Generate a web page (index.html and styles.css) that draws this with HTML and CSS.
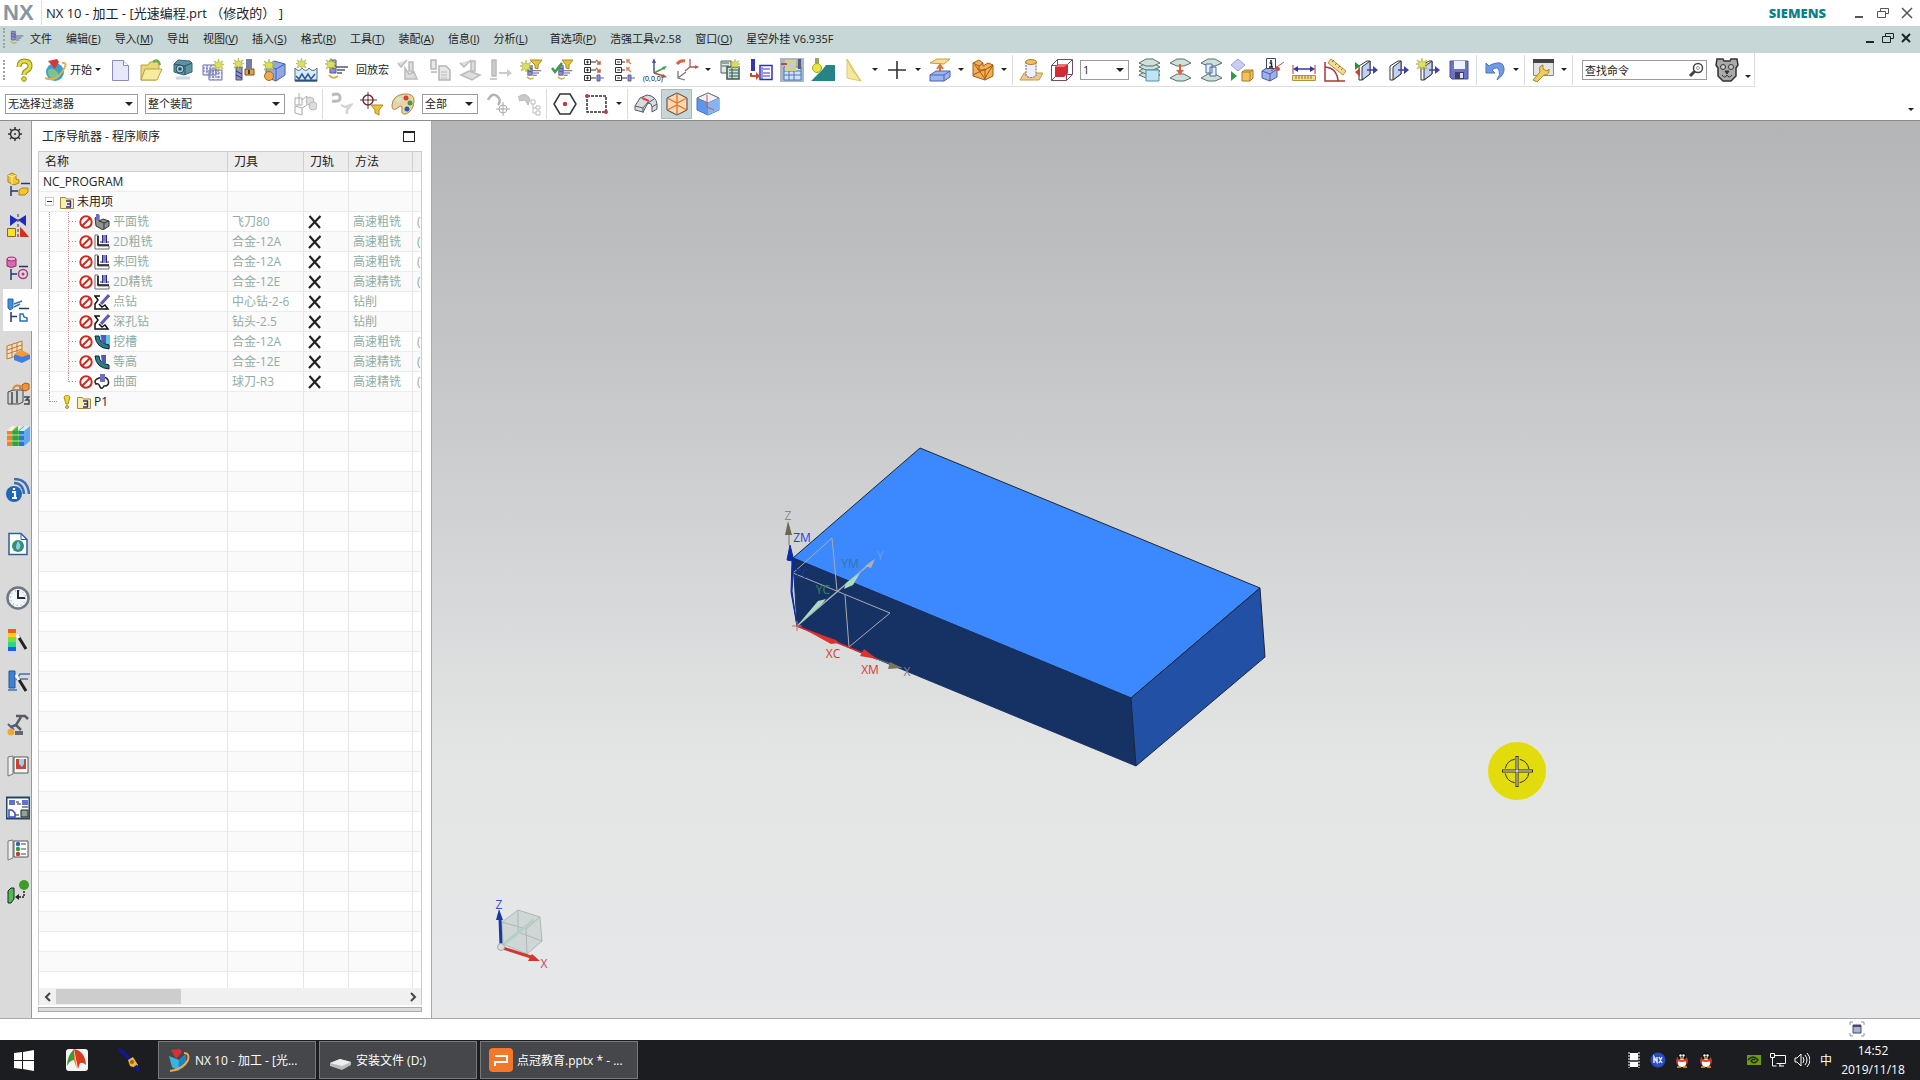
FILE: index.html
```html
<!DOCTYPE html>
<html lang="zh-CN">
<head>
    <meta charset="UTF-8">
    <title>NX 10 - 加工</title>
    <link rel="stylesheet" href="styles.css">
</head>
<body>
<svg class="defs" aria-hidden="true">
    <symbol id="ban" viewBox="0 0 14 14"><circle cx="7" cy="7" r="5.7" fill="#fff" stroke="#cc2a1e" stroke-width="2"/><path d="M3 11 11 3" stroke="#cc2a1e" stroke-width="2"/></symbol>
    <symbol id="cross" viewBox="0 0 14 14"><path d="M1.5 1 12 13M12.500 1 1 13" stroke="#222" stroke-width="2.200"/></symbol>
    <symbol id="folder" viewBox="0 0 14 14"><path d="M.5 2.500h5l1 1.500h7v9.500H.5z" fill="#f6efae" stroke="#9a8c3c"/><path d="M6 6h5M7 9h4M6 12h5M10.500 6v6" stroke="#3b2a8c" stroke-width="1.400"/></symbol>
    <symbol id="mill" viewBox="0 0 16 16"><path d="M1 1v14h14v-3H4V1z" fill="#fff" stroke="#666"/><path d="M4 2v9h11" fill="none" stroke="#111" stroke-width="1.500"/><path d="M8 1h5v6H8z" fill="#8080cc"/><path d="M8.500 1v8M12.500 1v8M6 8h9" stroke="#2b2b80"/></symbol>
    <symbol id="drill" viewBox="0 0 16 16"><path d="M6 2H1l3 4-3 4v5h13l-3-4-3 2-3-3" fill="#fff" stroke="#111" stroke-width="1.500"/><path d="M15 1 7 10" stroke="#5b5bb8" stroke-width="3"/></symbol>
    <symbol id="pocket" viewBox="0 0 16 16"><path d="M1 2h4q0 7 10 9v4Q2 14 1 2z" fill="#2a7f86" stroke="#123"/><path d="M7 1h5v8H8z" fill="#5656b4"/></symbol>
    <symbol id="newstar" viewBox="0 0 12 12"><path d="m6 0 1 4 4-2-2 3 3 1-3 1 2 4-4-2-1 3-1-3-4 2 2-4-3-1 3-1-2-3 4 2z" fill="#dfe05a" stroke="#929a3e" stroke-width=".5"/></symbol>
    <symbol id="tool" viewBox="0 0 24 24"><path d="M5 2h6v13H5z" fill="#8d90c9" stroke="#50549a"/><path d="M5 5l6 2M5 9l6 2" stroke="#3d4188"/><path d="M11 9h12M12 12h8M12 15h5" stroke="#555a80" stroke-width="1.300"/><path d="M4 17q4 5 9 1" fill="none" stroke="#d0b040" stroke-width="2"/></symbol>
    <symbol id="box" viewBox="0 0 24 24"><path d="m3 8 8-5 11 3v11l-9 6L3 19z" fill="#8fa8e8" stroke="#4b60a8"/><path d="m3 8 10 3v12M13 11l9-5" fill="none" stroke="#4b60a8"/></symbol>
    <symbol id="sheet" viewBox="0 0 24 24"><path d="m2 5 7-4h7l7 4-7 3H9z" fill="#cfe0dc" stroke="#55706a"/></symbol>
    <symbol id="plane" viewBox="0 0 24 24"><path d="m5 8 8-5h3v13l-8 6H5z" fill="#fff" stroke="#333"/><path d="m8 9 8-6v13l-8 6z" fill="#bfd0f4" stroke="#333"/><path d="M13 12h8" stroke="#4040a0" stroke-width="1.500"/><path d="m19 8 5 4-5 4z" fill="#4040a0"/></symbol>
    <symbol id="book" viewBox="0 0 24 24"><path d="m2 3 5-1v18l-5 2z" fill="#eee" stroke="#777"/><path d="M8 3h14v16H8z" fill="#fff" stroke="#555"/></symbol>
    <symbol id="penguin" viewBox="0 0 16 16"><ellipse cx="8" cy="9" rx="6" ry="5.500" fill="#c4392a"/><ellipse cx="8" cy="5" rx="4" ry="5" fill="#111"/><ellipse cx="8" cy="11" rx="4" ry="4" fill="#fff"/><circle cx="6.500" cy="3.500" r="1.200" fill="#fff"/><circle cx="9.500" cy="3.500" r="1.200" fill="#fff"/><path d="M6 6h4M3 15h4M9 15h4" stroke="#f2a02c" stroke-width="1.500"/><path d="M4 8q4 2 8 0" stroke="#d9412f" stroke-width="2" fill="none"/></symbol>
    <symbol id="restore" viewBox="0 0 12 12"><path d="M3.500 4V1.500h8v5H9M.5 4.500h8v6h-8z" fill="none" stroke="currentColor"/></symbol>
    <symbol id="nx" viewBox="0 0 24 24"><circle cx="12" cy="14" r="9" fill="#3f9ed0"/><path d="M5 12q4-4 9 2t-3 8q-7-3-6-10z" fill="#7ec48a"/><path d="M2 20q10 4 17-6t0-9" fill="none" stroke="#e5b04a" stroke-width="2"/><path d="m5 3 9-2 2 3-4 7z" fill="#cf3b35"/></symbol>
    <symbol id="nx-task" viewBox="0 0 24 24"><path d="m2 8 10 4 7-6v10l-8 7-6-4z" fill="#36b4e4"/><path d="m12 12 7-6v10l-8 7z" fill="#1c86c4"/><path d="M3 23q14-2 18-11 2-7-4-7" fill="none" stroke="#f0a84a" stroke-width="2"/><path d="m4 2 9-1 2 3-6 7z" fill="#d83038"/></symbol>
</svg>

<div class="app">
    <header class="titlebar">
        <span class="nx-logo">NX</span>
        <h1>NX 10 - 加工 - [光速编程.prt （修改的） ]</h1>
        <span class="siemens">SIEMENS</span>
        <div class="win-buttons">
            <button type="button" aria-label="最小化"><svg viewBox="0 0 12 12"><path d="M2 10h8" stroke="currentColor" stroke-width="2"/></svg></button>
            <button type="button" aria-label="还原"><svg><use href="#restore"/></svg></button>
            <button type="button" aria-label="关闭"><svg viewBox="0 0 12 12"><path d="m1 1 10 10M11 1 1 11" stroke="currentColor" stroke-width="1.500"/></svg></button>
        </div>
    </header>

    <nav class="menubar">
        <span class="grip"></span>
        <svg class="menu-icon"><use href="#tool"/></svg>
        <button type="button">文件</button>
        <button type="button">编辑(<u>E</u>)</button>
        <button type="button">导入(<u>M</u>)</button>
        <button type="button">导出</button>
        <button type="button">视图(<u>V</u>)</button>
        <button type="button">插入(<u>S</u>)</button>
        <button type="button">格式(<u>R</u>)</button>
        <button type="button">工具(<u>T</u>)</button>
        <button type="button">装配(<u>A</u>)</button>
        <button type="button">信息(<u>I</u>)</button>
        <button type="button">分析(<u>L</u>)</button>
        <button type="button" class="wide">首选项(<u>P</u>)</button>
        <button type="button">浩强工具v2.58</button>
        <button type="button">窗口(<u>O</u>)</button>
        <button type="button">星空外挂 V6.935F</button>
        <div class="doc-buttons">
            <button type="button" aria-label="最小化"><svg viewBox="0 0 12 12"><path d="M2 10h8" stroke="currentColor" stroke-width="2"/></svg></button>
            <button type="button" aria-label="还原"><svg><use href="#restore"/></svg></button>
            <button type="button" aria-label="关闭"><svg viewBox="0 0 12 12"><path d="m2 2 8 8M10 2l-8 8" stroke="currentColor" stroke-width="2"/></svg></button>
        </div>
    </nav>

    <div class="toolbar toolbar-main">
        <span class="grip"></span>
        <button type="button" class="tb" aria-label="帮助"><svg viewBox="0 0 24 24"><path d="M7 9q0-6 5.500-6T18 8q0 3-3 4.500T12 17" fill="none" stroke="#8f8a22" stroke-width="5"/><path d="M7 9q0-6 5.500-6T18 8q0 3-3 4.500T12 17" fill="none" stroke="#e6dc3c" stroke-width="3"/><circle cx="12" cy="21" r="2.300" fill="#e6dc3c" stroke="#8f8a22"/></svg></button>
        <button type="button" class="tb" aria-label="NX"><svg><use href="#nx"/></svg></button>
        <button type="button" class="tb-text">开始</button>
        <button type="button" class="drop" aria-label="开始选项"></button>
        <button type="button" class="tb" aria-label="新建"><svg viewBox="0 0 24 24"><path d="M4.500 2.500h11l5 5v15h-16z" fill="#e6e8fb" stroke="#8a8cc0"/><path d="M15.500 2.500v5h5" fill="#fff" stroke="#8a8cc0"/></svg></button>
        <button type="button" class="tb" aria-label="打开"><svg viewBox="0 0 24 24"><path d="M2 7h7l2-3h9v6l-3 12H2z" fill="#e9d878" stroke="#b5a145"/><path d="m2 22 4-11h17l-5 11z" fill="#f7ec9d" stroke="#b5a145"/><path d="M14 4q5-4 7 3" stroke="#70a85a" stroke-width="2.500" fill="none"/></svg></button>
        <button type="button" class="tb" aria-label="快照"><svg viewBox="0 0 24 24"><path d="m4 6 4-4 12 1 2 2v9l-8 3-10-3z" fill="#5d93a3" stroke="#3a6674"/><path d="m4 6 11 2 7-3M15 8v9" fill="none" stroke="#2c5563"/><circle cx="10" cy="11" r="4" fill="#9cc7d0" stroke="#264e5c"/><circle cx="10" cy="11" r="1.800" fill="#28505e"/><path d="M6 20h14" stroke="#c9d9dd" stroke-width="3"/></svg></button>
        <button type="button" class="tb" aria-label="创建程序"><svg viewBox="0 0 24 24"><path d="M2 7h13v10H2zM8 12h13v10H8z" fill="#eef0fb" stroke="#6a6ea8"/><path d="M2 10h13M2 13h13M6 7v10M10 7v10M8 15h13M8 19h13M12 12v10M17 12v10" stroke="#6a6ea8" stroke-dasharray="2 1"/><use href="#newstar" x="12" y="1" width="11" height="11"/></svg></button>
        <button type="button" class="tb" aria-label="创建刀具"><svg viewBox="0 0 24 24"><path d="M4 9h6v13H4z" fill="#9094cc" stroke="#4a4e90"/><path d="m4 13 6 3M4 17l6 3" stroke="#334"/><path d="M13 11h9v6h-9z" fill="#e0a74a" stroke="#774d22"/><path d="M14 1h6v10h-6z" fill="#777ca5"/><path d="M17 12v4" stroke="#553a20" stroke-width="2"/><use href="#newstar" x="1" y="0" width="11" height="11"/></svg></button>
        <button type="button" class="tb" aria-label="创建几何体"><svg viewBox="0 0 24 24"><use href="#box"/><circle cx="6" cy="18" r="4.500" fill="#f2a948" stroke="#a8692a"/><use href="#newstar" x="0" y="1" width="12" height="12"/></svg></button>
        <button type="button" class="tb" aria-label="创建方法"><svg viewBox="0 0 24 24"><path d="M1 10q4 5 7 0 4 5 7 0 4 5 8 0v13H1z" fill="#d9ecf2" stroke="#4a6e90"/><path d="m2 18 3 3 3-5 3 5 3-5 3 5 4-5" fill="none" stroke="#3056a0" stroke-width="1.500"/><path d="M1 22.500h22" stroke="#30507a" stroke-width="2"/><use href="#newstar" x="2" y="0" width="11" height="11"/></svg></button>
        <button type="button" class="tb" aria-label="创建工序"><svg viewBox="0 0 24 24"><use href="#tool"/><use href="#newstar" x="0" y="0" width="12" height="12"/></svg></button>
        <button type="button" class="tb-text macro">回放宏</button>
        <button type="button" class="tb" disabled aria-label="生成刀轨"><svg viewBox="0 0 24 24"><path d="m2 5 3 4 6-7M13 4h4v9h-4zM9 21V10l4 6 5-2 3 7z" fill="#ddd" stroke="#bbb" stroke-width="1.500"/></svg></button>
        <button type="button" class="tb" disabled aria-label="列出刀轨"><svg viewBox="0 0 24 24"><path d="M4 2h5v9H4zM4 14h6M12 8h7l4 4v10H12z" fill="#e8e8e8" stroke="#b5b5b5" stroke-width="1.500"/><path d="M14 14h6M14 17h6M14 20h6" stroke="#bbb"/></svg></button>
        <button type="button" class="tb" disabled aria-label="确认刀轨"><svg viewBox="0 0 24 24"><path d="m2 5 4 4 7-7M13 3h4v10h-4zM3 17l8-4 11 4-8 5z" fill="#ddd" stroke="#bbb" stroke-width="1.500"/></svg></button>
        <button type="button" class="tb" disabled aria-label="机床仿真"><svg viewBox="0 0 24 24"><path d="M3 2h4v16H3zM1 21h7M10 15h8" fill="#ccc" stroke="#bbb" stroke-width="1.500"/><path d="m18 11 5 4-5 4z" fill="#ccc"/></svg></button>
        <button type="button" class="tb" aria-label="新建过滤"><svg viewBox="0 0 24 24"><use href="#tool" x="4" y="6" width="18" height="18"/><path d="M10 2h12l-4 5v4l-3-1V7z" fill="#e9c33c" stroke="#a8872a"/><use href="#newstar" x="0" y="2" width="12" height="12"/></svg></button>
        <button type="button" class="tb" aria-label="确认过滤"><svg viewBox="0 0 24 24"><use href="#tool" x="4" y="6" width="18" height="18"/><path d="M11 2h11l-4 5v4l-3-1V7z" fill="#e9c33c" stroke="#a8872a"/><path d="m1 10 3 4 7-9" fill="none" stroke="#3d9c4a" stroke-width="2.500"/></svg></button>
        <button type="button" class="tb" aria-label="展开"><svg viewBox="0 0 24 24"><path d="M2.500 1.500h6v5h-6zM2.500 9.500h6v5h-6zM2.500 17.500h6v5h-6z" fill="#fff" stroke="#333"/><path d="M4 4h3M5.500 2.500v3M4 12h3M5.500 10.500v3M4 20h3M5.500 18.500v3M9 4h5M9 12h5M9 20h5" stroke="#333"/><path d="m14 2 4 4m0-3v3h-3M14 10l4 4m0-3v3h-3" stroke="#c8644a" stroke-width="1.500" fill="none"/><path d="M15 17h3v6h-3zM18 20h4" stroke="#5a5eaa" fill="#8a8dd0"/></svg></button>
        <button type="button" class="tb" aria-label="折叠"><svg viewBox="0 0 24 24"><path d="M2.500 1.500h6v5h-6zM2.500 9.500h6v5h-6zM2.500 17.500h6v5h-6z" fill="#fff" stroke="#333"/><path d="M4 4h3M4 12h3M4 20h3M9 4h3M9 12h3M9 20h5" stroke="#333"/><path d="m18 6-4-4v3m0-3h3M18 14l-4-4v3m0-3h3" stroke="#d98a5a" stroke-width="1.500" fill="none"/><path d="M15 17h3v6h-3zM18 20h4" stroke="#5a5eaa" fill="#8a8dd0"/></svg></button>
        <button type="button" class="tb" aria-label="原点"><svg class="spill" viewBox="0 0 24 24"><path d="M10 15V3" stroke="#4a50a8" stroke-width="1.500"/><path d="m10 0 2 5H8z" fill="#4a50a8"/><path d="m10 15 10-5" stroke="#3f9c56" stroke-width="1.500"/><path d="m23 8-5 1 2 3z" fill="#3f9c56"/><path d="m10 15 10 3" stroke="#c04c3c" stroke-width="1.500"/><path d="m23 19-5 1 1-4z" fill="#c04c3c"/><text class="origin" x="-1" y="23">(0,0,0)</text></svg></button>
        <button type="button" class="tb" aria-label="定向"><svg viewBox="0 0 24 24"><path d="M2 6q3-4 8-3" stroke="#d9673e" stroke-width="3" fill="none"/><path d="M15 1v8h8M15 9l-5 4" stroke="#b35a50" fill="none" stroke-width="1.300"/><path d="m24 9-4-2v4z" fill="#b35a50"/><path d="M3 13v7l7 2M3 20l8-6" stroke="#777" fill="none" stroke-width="1.300"/></svg></button>
        <button type="button" class="drop" aria-label="定向选项"></button>
        <button type="button" class="tb" aria-label="后处理"><svg viewBox="0 0 24 24"><path d="M3 3h10v12H3z" fill="#dfe8e2" stroke="#4a6258"/><path d="M4 5h7M4 8h7" stroke="#4a6258"/><path d="M9 9h12v12H9z" fill="#cfe2da" stroke="#395a50" stroke-width="1.500"/><path d="M11 12h9M11 15h9M11 18h9M14 10v11" stroke="#395a50"/><use href="#newstar" x="12" y="1" width="10" height="10"/></svg></button>
        <button type="button" class="tb" aria-label="车间文档"><svg viewBox="0 0 24 24"><path d="M2 1h4v12H2z" fill="#3636b0"/><path d="M11 7.500h12v14H11z" fill="#fff" stroke="#3030c0" stroke-width="1.500"/><path d="M14 11h7M14 15h7M14 18h7M13 9v12" stroke="#3030c0"/><path d="M2 15v3h6" stroke="#c84b32" stroke-width="2" fill="none"/><path d="m7 14 4 4-4 4z" fill="#c84b32"/></svg></button>
        <button type="button" class="tb" aria-label="网格"><svg viewBox="0 0 24 24"><path d="M0 0h24v24H0z" fill="#aab6c2"/><path d="M4 9h17v13H4z" fill="#cfe0f8" stroke="#4a76c0"/><path d="M4 13h17M4 17h17M9 9v13M14 9v13" stroke="#4a76c0"/><path d="M6 3h9v9H6z" fill="#c5ccd0" stroke="#dcd373" stroke-width="2"/><path d="M1 6h6" stroke="#c04a4a" stroke-width="2"/><path d="M18 1h3v10h-3z" fill="#555a80"/></svg></button>
        <button type="button" class="tb" aria-label="切削"><svg viewBox="0 0 24 24"><path d="m0 23 12-12 3-4h9v16z" fill="#268486"/><path d="M4 0h4v6H4z" fill="#9ba36a"/><circle cx="6" cy="10" r="4.500" fill="#e8e840" stroke="#aaa520"/></svg></button>
        <button type="button" class="tb" aria-label="分析"><svg viewBox="0 0 24 24"><path d="M5 1v19l14 3z" fill="#f5e9a2" stroke="#ddca6c"/><path d="m5 1 6 12 8 10" stroke="#e0c050" fill="none"/></svg></button>
        <button type="button" class="drop" aria-label="分析选项"></button>
        <button type="button" class="tb" aria-label="点"><svg viewBox="0 0 24 24"><path d="M12 3v18M3 12h18" stroke="#333" stroke-width="1.600"/></svg></button>
        <button type="button" class="drop" aria-label="点选项"></button>
        <button type="button" class="tb" aria-label="偏置"><svg viewBox="0 0 24 24"><path d="m2 5 7-4h13l-6 5z" fill="#f6dc98" stroke="#c79a3e"/><path d="M12 16V8M9 11l3-4 3 4" stroke="#d8722e" stroke-width="2" fill="none"/><path d="m2 17 6-4h14v6l-6 4H2z" fill="#9cb4f0" stroke="#4d62b4"/><path d="M2 17h14l6-4M16 17v6" stroke="#4d62b4" fill="none"/></svg></button>
        <button type="button" class="drop" aria-label="偏置选项"></button>
        <button type="button" class="tb" aria-label="拆分"><svg viewBox="0 0 24 24"><path d="m2 5 6-3 4 3v3l5-3 5 2v11l-8 4-12-4z" fill="#f0b24e" stroke="#9a5c1e"/><path d="m2 5 6 3 4-3M8 8v4l6 0 8-5M14 11v11M2 17l12-6M4 7l10 14M14 20l8-13" fill="none" stroke="#a85220"/></svg></button>
        <button type="button" class="drop" aria-label="拆分选项"></button>
        <span class="sep"></span>
        <button type="button" class="tb" aria-label="圆柱"><svg viewBox="0 0 24 24"><path d="m1 22 4-7h19l-4 7z" fill="#ebc98a" stroke="#c19a4e"/><path d="M7 4v14q5 3 10 0V4" fill="#eef" stroke="#667" stroke-dasharray="2 1"/><ellipse cx="12" cy="4" rx="5.500" ry="2.500" fill="#f4c05c" stroke="#b07c2a"/></svg></button>
        <button type="button" class="tb" aria-label="包容块"><svg viewBox="0 0 24 24"><path d="M1.500 7.500h15v15h-15zM7.500 1.500h15v15h-15zM1.500 7.500l6-6M16.500 7.500l6-6M16.500 22.500l6-6M1.500 22.500l6-6" fill="none" stroke="#7a4a5a"/><path d="m5 9 4-3h9v9l-4 4H5z" fill="#cf2d36"/><path d="m5 9 4-3h9l-4 3z" fill="#ee7076"/></svg></button>
        <div class="select layer-select"><select aria-label="工作图层"><option>1</option></select></div>
        <button type="button" class="tb" aria-label="图层设置"><svg viewBox="0 0 24 24"><use href="#sheet" y="12" width="24" height="24"/><use href="#sheet" y="8" width="24" height="24"/><use href="#sheet" y="4" width="24" height="24"/><use href="#sheet" width="24" height="24"/><path d="M9 12h13v11H9z" fill="#bfe4f2" stroke="#4a90a8"/></svg></button>
        <button type="button" class="tb" aria-label="移动至图层"><svg viewBox="0 0 24 24"><use href="#sheet" width="24" height="24"/><use href="#sheet" y="15" width="24" height="24"/><path d="M12 6v8" stroke="#e0603a" stroke-width="2"/><path d="M8 12h8l-4 5z" fill="#e0603a"/></svg></button>
        <button type="button" class="tb" aria-label="复制至图层"><svg viewBox="0 0 24 24"><use href="#sheet" width="24" height="24"/><use href="#sheet" y="15" width="24" height="24"/><path d="M7 6h6v9H7zM11 9h6v9h-6z" fill="#e4eefa" stroke="#4b6a94"/></svg></button>
        <button type="button" class="tb" aria-label="替换"><svg viewBox="0 0 24 24"><path d="m1 7 7-6 7 6-7 6z" fill="#c8cdf2" stroke="#979fd6"/><path d="m1 13 6 5-6 5z" fill="#2f9a4a"/><path d="m12 14 3-2h8v8l-3 3h-8z" fill="#f2c25a" stroke="#a87a28"/><path d="M12 14h8l3-2M20 14v9" fill="none" stroke="#a87a28"/></svg></button>
        <button type="button" class="tb" aria-label="对象信息"><svg viewBox="0 0 24 24"><path d="m1 13 6-4h9v10l-7 4-8-3z" fill="#9cb0ea" stroke="#4b5ea8"/><path d="m1 13 8 3v7M9 16l7-5" stroke="#4b5ea8" fill="none"/><path d="M5.500.5h9v10h-9z" fill="#fff" stroke="#446"/><path d="M10 2v2M8.500 5h2v4M8 9h4" stroke="#223" stroke-width="1.500" fill="none"/><path d="m10 13 13-9" stroke="#c84848"/><circle cx="17" cy="11" r="2" fill="#d24a3a"/></svg></button>
        <button type="button" class="tb" aria-label="测量距离"><svg viewBox="0 0 24 24"><path d="M1 7v9M23 7v9" stroke="#b03a3a"/><path d="M3 11h18" stroke="#35359c" stroke-width="1.500"/><path d="m1 11 5-3v6zM23 11l-5-3v6z" fill="#35359c"/><path d="M.5 17.500h23v5H.5z" fill="#f2dc94" stroke="#b3923c"/><path d="M4 18v3M7 18v3M10 18v3M13 18v3M16 18v3M19 18v3" stroke="#8f7430"/></svg></button>
        <button type="button" class="tb" aria-label="测量角度"><svg viewBox="0 0 24 24"><path d="M2 4v19h20M2 9q12 1 13 14" fill="none" stroke="#a83838" stroke-width="1.500"/><path d="m8 1 15 12-3 4L5 5z" fill="#f2dc94" stroke="#b3923c"/><path d="m9 4 2-2M12 7l2-2M15 10l2-2M18 12l2-2" stroke="#8f7430"/></svg></button>
        <button type="button" class="tb" aria-label="替换面"><svg viewBox="0 0 24 24"><use href="#plane"/><path d="m1 4 5 4-5 4z" fill="#2f8a3e"/><path d="m6 10-5 4 5 5z" fill="#cf402e"/></svg></button>
        <button type="button" class="tb" aria-label="偏置面"><svg><use href="#plane"/></svg></button>
        <button type="button" class="tb" aria-label="新建面"><svg viewBox="0 0 24 24"><use href="#plane"/><use href="#newstar" x="0" y="0" width="12" height="12"/></svg></button>
        <button type="button" class="tb" aria-label="保存"><svg viewBox="0 0 24 24"><path d="M3 3h18v18H5l-2-2z" fill="#6c73c4" stroke="#4a4e94"/><path d="M7 3h11v8H7z" fill="#eef2fa"/><path d="M8 14h9v7H8z" fill="#3d4060"/><path d="M13 15h3v5h-3z" fill="#dde"/></svg></button>
        <span class="sep"></span>
        <button type="button" class="tb" aria-label="撤消"><svg viewBox="0 0 24 24"><path d="M3 5v10h9l-3-3q5-4 7 0t-2 10q8-6 7-12T14 5 6 8z" fill="#6d9be4" stroke="#4a76bc"/></svg></button>
        <button type="button" class="drop" aria-label="撤消选项"></button>
        <span class="sep"></span>
        <button type="button" class="tb" aria-label="定制"><svg viewBox="0 0 24 24"><path d="M2.500 1.500h20v16h-20z" fill="#e4e4e4" stroke="#888"/><path d="M2 1h21v4H2z" fill="#444"/><path d="m2 22 7-8q-2-6 3-7v4l4 2 2-2q1 6-5 6l-7 7z" fill="#f0cc58" stroke="#a8862a"/></svg></button>
        <button type="button" class="drop" aria-label="定制选项"></button>
        <span class="sep"></span>
        <div class="search">
            <input type="text" aria-label="查找命令" value="查找命令">
            <svg viewBox="0 0 16 16"><circle cx="10" cy="6" r="4.500" fill="none" stroke="#444" stroke-width="1.500"/><path d="m7 9-5 5" stroke="#444" stroke-width="3"/><circle cx="10" cy="6" r="1.500" fill="none" stroke="#999"/></svg>
        </div>
        <button type="button" class="tb" aria-label="角色"><svg viewBox="0 0 24 24"><path d="M2 1h6l1 2h6l1-2h6l1 6-2 3v8l-5 5H8l-5-5v-8L1 7z" fill="#aaa" stroke="#333" stroke-width="1.500"/><circle cx="8" cy="9" r="2.500" fill="#ccc" stroke="#333"/><circle cx="16" cy="9" r="2.500" fill="#ccc" stroke="#333"/><path d="M10 13h4l-2 3z" fill="#333" stroke="#333"/><path d="M7 17q3 4 5 0 2 4 5 0" fill="none" stroke="#333"/></svg></button>
        <button type="button" class="drop drop-low" aria-label="工具条选项"></button>
    </div>

    <div class="toolbar toolbar-select">
        <div class="select filter-select"><select aria-label="类型过滤器"><option>无选择过滤器</option></select></div>
        <div class="select scope-select"><select aria-label="选择范围"><option>整个装配</option></select></div>
        <button type="button" class="tb" disabled aria-label="部件间链接"><svg viewBox="0 0 24 24"><path d="M2 6h7v7H2zM2 14l7 2v7l-7-2zM6 1v12M9 8l5-4v9l-5 3" fill="none" stroke="#aaa"/><circle cx="17" cy="9" r="4" fill="#ddd" stroke="#bbb"/><circle cx="20" cy="14" r="4" fill="#ddd" stroke="#bbb"/></svg></button>
        <span class="sep"></span>
        <button type="button" class="tb" disabled aria-label="重置"><svg viewBox="0 0 24 24"><path d="M3 3q9-3 8 4-1 3-8 2" fill="none" stroke="#bbb" stroke-width="3"/><path d="m12 13 4 2 6-2-4 5v4" fill="none" stroke="#d4d4d4" stroke-width="2.500"/></svg></button>
        <button type="button" class="tb" aria-label="捕捉过滤"><svg viewBox="0 0 24 24"><circle cx="8" cy="8" r="5" fill="none" stroke="#6a3030" stroke-width="1.500"/><path d="M8 0v17M0 8h17" stroke="#6a3030"/><path d="M11 13h12l-4 5v5l-4-2v-3z" fill="#e9c33c" stroke="#b08a28"/></svg></button>
        <button type="button" class="tb" aria-label="颜色过滤"><svg viewBox="0 0 24 24"><path d="M1 13Q2 3 13 2t10 8-8 12q-5 1-4-5t-6 0q-4 2-4-4z" fill="#ecd3a0" stroke="#a8864c"/><circle cx="8" cy="8" r="2.500" fill="#c8e8e0"/><circle cx="15" cy="6" r="2.500" fill="#d04030"/><circle cx="19" cy="11" r="2.500" fill="#38a04a"/><circle cx="16" cy="17" r="2.500" fill="#2a56c0"/></svg></button>
        <div class="select all-select"><select aria-label="规则"><option>全部</option></select></div>
        <button type="button" class="tb" disabled aria-label="旋转"><svg viewBox="0 0 24 24"><path d="M2 8q4-8 9-4t1 9" fill="none" stroke="#b4b4b4" stroke-width="2.500"/><circle cx="17" cy="17" r="4" fill="none" stroke="#aaa"/><path d="M17 10v14M10 17h14" stroke="#aaa"/></svg></button>
        <button type="button" class="tb" disabled aria-label="层级"><svg viewBox="0 0 24 24"><path d="M1 5q8-6 12 2l-2 6-3-5-6 1" fill="#c8c8c8" stroke="#bbb"/><path d="M14 8h4v4h-4zM19 14h4v3h-4zM19 19h4v4h-4zM16 12v9h3M16 16h3" fill="none" stroke="#bbb"/></svg></button>
        <span class="sep"></span>
        <button type="button" class="tb" aria-label="选择意图"><svg viewBox="0 0 24 24"><path d="M7 2h10l6 10-6 10H7L1 12z" fill="#fff" stroke="#333" stroke-width="1.500"/><circle cx="12" cy="12" r="2.200" fill="#c03a44"/></svg></button>
        <button type="button" class="tb" aria-label="矩形选择"><svg viewBox="0 0 24 24"><path d="M3 4h19v16H3z" fill="none" stroke="#333" stroke-width="1.500" stroke-dasharray="3 1"/><circle cx="3" cy="4" r="2" fill="#c03a44"/><circle cx="22" cy="20" r="2" fill="#c03a44"/></svg></button>
        <button type="button" class="drop" aria-label="选择方式"></button>
        <span class="sep"></span>
        <button type="button" class="tb" aria-label="着色"><svg viewBox="0 0 24 24"><path d="m1 14 5-8 7-3q9 1 10 9v5l-5 3v-5q0-4-4-4l-5 9-8-2z" fill="#d8dbe0" stroke="#555b66"/><path d="m1 14 8 2 5-6M9 16v5M14 11l6-4M18 15l5-3" fill="none" stroke="#555b66"/><path d="m8 6 7 3" stroke="#d04848" stroke-width="2"/></svg></button>
        <button type="button" class="tb active" aria-label="带边着色"><svg viewBox="0 0 24 24"><path d="m2 6 10-5 10 5v12l-10 5-10-5z" fill="#fcd9b4" stroke="#444"/><path d="m2 6 10 5 10-5M12 11v12M2 18l10-5 10 5M12 1v12" stroke="#e0702e" fill="none" stroke-width="1.300"/></svg></button>
        <button type="button" class="tb" aria-label="透视"><svg viewBox="0 0 24 24"><path d="m1 6 11-5 11 5v12l-11 5-11-5z" fill="#5b97ec" stroke="#4a72c0"/><path d="m1 6 11-5 11 5-11 5z" fill="#eef2fa" stroke="#777"/><path d="m12 11 11-5v12l-11 5z" fill="#86b4f4"/><path d="M11 3v12l7 3" stroke="#d05050" fill="none"/></svg></button>
        <button type="button" class="drop drop-end" aria-label="选择条选项"></button>
    </div>

    <main class="work">
        <aside class="resource-bar">
            <button type="button" class="gear" aria-label="设置"><svg viewBox="0 0 16 16"><circle cx="8" cy="8" r="4.500" fill="none" stroke="#333" stroke-width="1.500"/><circle cx="8" cy="8" r="1" fill="#333"/><path d="M8 1v3M8 12v3M1 8h3M12 8h3M3 3l2 2M11 11l2 2M13 3l-2 2M5 11l-2 2" stroke="#333" stroke-width="1.500"/></svg></button>
            <button type="button" aria-label="装配导航器"><svg viewBox="0 0 24 24"><path d="m2 3 4-2 4 2v4l3 1v3l-5 2-6-3z" fill="#f2c42e" stroke="#a88418"/><path d="m2 3 4 2 4-2M6 5v7" stroke="#fff3a0" fill="none"/><path d="M5 14v10M5 19h7M15 11.500h9" stroke="#223a70" stroke-width="1.500"/><path d="m13 18 3-2h6v4l-3 3h-6z" fill="#f2c42e" stroke="#a88418"/></svg></button>
            <button type="button" aria-label="约束导航器"><svg viewBox="0 0 24 24"><path d="m4 1 8 5-8 6zM20 1l-8 5 8 6z" fill="#1d2cc0"/><path d="M12 0v24" stroke="#333" stroke-dasharray="3 2"/><path d="M1.500 14.500h8v8h-8z" fill="#f6e22e" stroke="#886a10"/><path d="M14 13q1 0 9 10h-9z" fill="#d0341e"/></svg></button>
            <button type="button" aria-label="部件导航器"><svg viewBox="0 0 24 24"><path d="M1 3v7q4 3 9 0V3z" fill="#dc6ab0" stroke="#8e2c6e"/><ellipse cx="5.500" cy="3" rx="4.500" ry="2" fill="#f4b0d8" stroke="#8e2c6e"/><path d="M5 13v11M5 18h6M13 10.500h9" stroke="#223a70" stroke-width="1.500"/><circle cx="17" cy="18" r="4.500" fill="none" stroke="#b03a80" stroke-width="1.500"/><circle cx="17" cy="18" r="1.500" fill="#b03a80"/></svg></button>
            <button type="button" class="current" aria-label="工序导航器"><svg viewBox="0 0 24 24"><path d="M2 1h5v9l-3 2-2-2z" fill="#3f90d8" stroke="#2a64a8"/><path d="m8 6 8-3M8 9l6-3" stroke="#3a72b4" stroke-width="1.500"/><path d="M5 14v10M5 18.500h6M13 10.500h10" stroke="#223a70" stroke-width="1.500"/><path d="M14 16h3l1 3 3 1v3h-7z" fill="none" stroke="#2a72b8" stroke-width="1.500"/></svg></button>
            <button type="button" aria-label="机床导航器"><svg viewBox="0 0 24 24"><path d="M1 6 16 1v13L1 19zM1 10l15-5M1 14l15-5M6 5v12M11 3v12" fill="#f3e2c8" stroke="#c0762c"/><path d="m8 15 7-4 9 4v4l-8 4-8-3z" fill="#3f7de0"/><path d="m8 14 7-4 9 4-8 3z" fill="#f09a38"/></svg></button>
            <button type="button" aria-label="机械导航器"><svg viewBox="0 0 24 24"><path d="m2 10 5-2h10v12l-4 2H2z" fill="#cfd4d8" stroke="#444"/><path d="M6 10v12M11 9v12M18 15h5l-3 3h3v4h-5" stroke="#444" stroke-width="1.500" fill="none"/><path d="M7 8q1-6 7-4v3" fill="none" stroke="#d88432" stroke-width="2"/><path d="m16 3 3-2 4 1v5l-3 2-4-1z" fill="#f2923a" stroke="#a85c1c"/></svg></button>
            <button type="button" class="spaced" aria-label="重用库"><svg viewBox="0 0 24 24"><path d="m1 7 5-5h3L6 7z" fill="#fff6d0"/><path d="M1 7h5v15H1z" fill="#f0812a"/><path d="m7 7 5-5h4l-4 5z" fill="#e4f8c8"/><path d="m6 7 6-5v17l-6 3zM12 7l6-5v17l-6 3z" fill="#48b848"/><path d="M7 7h5v15H7z" fill="#2fa33a"/><path d="m13 7 6-5h5l-5 5z" fill="#d8ecff"/><path d="m18 7 6-5v15l-6 5z" fill="#60a8f0"/><path d="M13 7h5v15h-5z" fill="#2a78c8"/><path d="M1 11h17M1 17h17" stroke="#fff" stroke-width=".7"/></svg></button>
            <button type="button" class="spaced" aria-label="HD3D"><svg viewBox="0 0 24 24"><circle cx="8" cy="16" r="8" fill="#1f66b8"/><path d="M8 10v2M6 14h3v6M6 20h5" stroke="#fff" stroke-width="2.200" fill="none"/><path d="M8 5q9 0 10 11M8 1q14 0 15 15" fill="none" stroke="#3a6cb8" stroke-width="2.500"/></svg></button>
            <button type="button" class="spaced" aria-label="浏览器"><svg viewBox="0 0 24 24"><path d="M3 1.500h12l6 6v15H3z" fill="#fff" stroke="#2f5f9a" stroke-width="1.500"/><path d="M15 1.500v6h6" fill="none" stroke="#2f5f9a"/><circle cx="12" cy="14" r="6" fill="#2f8f7c"/><path d="M12 9q5 6 0 9-4-2 0-9z" fill="#8fd0e0"/></svg></button>
            <button type="button" aria-label="历史记录"><svg viewBox="0 0 24 24"><circle cx="12" cy="12" r="10.500" fill="#f4f8fb" stroke="#6e7880" stroke-width="2.500"/><circle cx="12" cy="12" r="7.500" fill="none" stroke="#78828a" stroke-dasharray="1 3"/><path d="M12 4v8h7" fill="none" stroke="#1a2c48" stroke-width="2"/></svg></button>
            <button type="button" aria-label="材料"><svg viewBox="0 0 24 24"><path d="M2 1h8v4H2z" fill="#f05a24"/><path d="M2 5h8v4H2z" fill="#f8d020"/><path d="M2 9h8v5H2z" fill="#7ee030"/><path d="M2 14h8v5H2z" fill="#20d890"/><path d="M2 19h8v4H2z" fill="#1a60e8"/><path d="m12 8 8 13" stroke="#222" stroke-width="3"/><path d="m11 7 2 3" stroke="#fff" stroke-width="3"/></svg></button>
            <button type="button" aria-label="加工向导"><svg viewBox="0 0 24 24"><path d="M3 1h6v17H3z" fill="#3f80d0" stroke="#2a5494"/><path d="M24 4H14l-4 6M22 9h-8M2 20h9" fill="none" stroke="#4472b0" stroke-width="1.500"/><path d="m12 8 8 13" stroke="#222" stroke-width="3"/><path d="m10 5 3 5" stroke="#fff" stroke-width="3"/></svg></button>
            <button type="button" aria-label="机器人"><svg viewBox="0 0 24 24"><path d="M10 4h9l3 3M15 5l-5 8-5 2M10 13l5 5" fill="none" stroke="#555c64" stroke-width="2.500"/><path d="m2 12 6 6" stroke="#4a5a9a" stroke-width="2"/><circle cx="5" cy="20" r="3.500" fill="#f0a832"/><path d="M9 19h8v4H9z" fill="#667"/></svg></button>
            <button type="button" aria-label="系统场景"><svg viewBox="0 0 24 24"><use href="#book"/><path d="M10 5h10v10H10z" fill="#d0402e"/><path d="M13 5h5v5l-2 3-3-3z" fill="#8fd4f4"/></svg></button>
            <button type="button" aria-label="资源"><svg viewBox="0 0 24 24"><path d="M.5 1.500h23v21H.5z" fill="#fff" stroke="#1f4a66" stroke-width="2"/><path d="M3 4h6v5H3zM16 4h6v5h-6z" fill="#6470d0"/><path d="M10 6h3M11 8h4M9 19h4M16 11h6" stroke="#222"/><path d="M3 14h3l3 3v4H3z" fill="none" stroke="#3a4ac0" stroke-width="1.500"/><path d="M15 14h7v7h-7z" fill="#8fa298" stroke="#222"/></svg></button>
            <button type="button" aria-label="可视化"><svg viewBox="0 0 24 24"><use href="#book"/><circle cx="12" cy="6" r="2.200" fill="#2a62c8"/><circle cx="12" cy="11" r="2.200" fill="#2f9c3c"/><circle cx="12" cy="16" r="2.200" fill="#d0342a"/><path d="M15 6h5M15 11h5M15 16h5" stroke="#444"/></svg></button>
            <button type="button" aria-label="模板"><svg viewBox="0 0 24 24"><path d="m2 11 3-3h3v11l-3 4H2z" fill="#4cbc54" stroke="#222"/><circle cx="18" cy="5" r="5" fill="#3c9c2a"/><path d="M18 11v6h-6" fill="none" stroke="#222" stroke-width="1.500" stroke-dasharray="2 1"/><path d="m13 14-4 3 4 3z" fill="#222"/></svg></button>
        </aside>

        <section class="navigator">
            <div class="nav-title">
                <h2>工序导航器 - 程序顺序</h2>
                <button type="button" class="maximize" aria-label="最大化"></button>
            </div>
            <div class="nav-frame">
                <div class="nav-rows">
                    <table class="ops">
                        <colgroup><col><col class="c-tool"><col class="c-path"><col class="c-method"><col class="c-more"></colgroup>
                        <thead>
                            <tr><th>名称</th><th>刀具</th><th>刀轨</th><th>方法</th><th></th></tr>
                        </thead>
                        <tbody id="op-rows">
                            <tr><td class="root">NC_PROGRAM</td><td></td><td></td><td></td><td></td></tr>
                            <tr><td><div class="node"><span class="toggle"></span><svg class="ic14"><use href="#folder"/></svg>未用项</div></td><td></td><td></td><td></td><td></td></tr>
                            <tr class="op"><td><div class="node"><i class="g1"></i><i class="g2"></i><svg class="ic14"><use href="#ban"/></svg><svg class="ic16" viewBox="0 0 16 16"><path d="m1 4 4-3v6l4-2 6 2v5l-6 4-7-4z" fill="#8d9290" stroke="#333"/><path d="m5 7 5 2 5-2M10 9v6" fill="none" stroke="#333"/><path d="M2 0h3v6H2z" fill="#6f6fc0"/></svg>平面铣</div></td><td>飞刀80</td><td><svg class="ic14"><use href="#cross"/></svg></td><td>高速粗铣</td><td>(</td></tr>
                            <tr class="op"><td><div class="node"><i class="g1"></i><i class="g2"></i><svg class="ic14"><use href="#ban"/></svg><svg class="ic16"><use href="#mill"/></svg>2D粗铣</div></td><td>合金-12A</td><td><svg class="ic14"><use href="#cross"/></svg></td><td>高速粗铣</td><td>(</td></tr>
                            <tr class="op"><td><div class="node"><i class="g1"></i><i class="g2"></i><svg class="ic14"><use href="#ban"/></svg><svg class="ic16"><use href="#mill"/></svg>来回铣</div></td><td>合金-12A</td><td><svg class="ic14"><use href="#cross"/></svg></td><td>高速粗铣</td><td>(</td></tr>
                            <tr class="op"><td><div class="node"><i class="g1"></i><i class="g2"></i><svg class="ic14"><use href="#ban"/></svg><svg class="ic16"><use href="#mill"/></svg>2D精铣</div></td><td>合金-12E</td><td><svg class="ic14"><use href="#cross"/></svg></td><td>高速精铣</td><td>(</td></tr>
                            <tr class="op"><td><div class="node"><i class="g1"></i><i class="g2"></i><svg class="ic14"><use href="#ban"/></svg><svg class="ic16"><use href="#drill"/></svg>点钻</div></td><td>中心钻-2-6</td><td><svg class="ic14"><use href="#cross"/></svg></td><td>钻削</td><td></td></tr>
                            <tr class="op"><td><div class="node"><i class="g1"></i><i class="g2"></i><svg class="ic14"><use href="#ban"/></svg><svg class="ic16"><use href="#drill"/></svg>深孔钻</div></td><td>钻头-2.5</td><td><svg class="ic14"><use href="#cross"/></svg></td><td>钻削</td><td></td></tr>
                            <tr class="op"><td><div class="node"><i class="g1"></i><i class="g2"></i><svg class="ic14"><use href="#ban"/></svg><svg class="ic16" viewBox="0 0 16 16"><path d="M6 1h10v13H8z" fill="#5cc8ec"/><use href="#pocket"/></svg>挖槽</div></td><td>合金-12A</td><td><svg class="ic14"><use href="#cross"/></svg></td><td>高速粗铣</td><td>(</td></tr>
                            <tr class="op"><td><div class="node"><i class="g1"></i><i class="g2"></i><svg class="ic14"><use href="#ban"/></svg><svg class="ic16"><use href="#pocket"/></svg>等高</div></td><td>合金-12E</td><td><svg class="ic14"><use href="#cross"/></svg></td><td>高速精铣</td><td>(</td></tr>
                            <tr class="op last"><td><div class="node"><i class="g1"></i><i class="g2"></i><svg class="ic14"><use href="#ban"/></svg><svg class="ic16" viewBox="0 0 16 16"><path d="M5 4q-6 2-3 6 3-1 4 3 2 3 4-1 6 0 4-6-2-4-9-2z" fill="#fff" stroke="#222" stroke-width="1.500"/><path d="M6 0h5v8H6z" fill="#6f6fc0"/></svg>曲面</div></td><td>球刀-R3</td><td><svg class="ic14"><use href="#cross"/></svg></td><td>高速精铣</td><td>(</td></tr>
                            <tr><td><div class="node"><i class="g3"></i><svg class="ic14" viewBox="0 0 14 14"><path d="M4 2q3-4 6 0L8 9H6z" fill="#f2d42a" stroke="#a8901a"/><circle cx="7" cy="12" r="1.500" fill="#f2d42a" stroke="#a8901a"/></svg><svg class="ic14"><use href="#folder"/></svg>P1</div></td><td></td><td></td><td></td><td></td></tr>
                        </tbody>
                    </table>
                </div>
                <div class="scroll">
                    <button type="button" aria-label="向左"><svg viewBox="0 0 8 10"><path d="M6 1 2 5l4 4" fill="none" stroke="#444" stroke-width="2"/></svg></button>
                    <div class="track"><div class="thumb"></div></div>
                    <button type="button" aria-label="向右"><svg viewBox="0 0 8 10"><path d="m2 1 4 4-4 4" fill="none" stroke="#444" stroke-width="2"/></svg></button>
                </div>
            </div>
            <div class="splitter"></div>
        </section>

        <section class="viewport">
            <svg viewBox="432 121 1488 897">
                <g stroke="#1c2636" stroke-linejoin="round">
                    <path d="M920 448 1260 588 1131 698 793 558z" fill="#3c88ff"/>
                    <path d="M793 558 1131 698 1136 766 797 626z" fill="#163264" stroke="#163264"/>
                    <path d="M1131 698 1260 588 1265 657 1136 766z" fill="#2250a4"/>
                </g>
                <!-- datum planes -->
                <path d="M832 538 793 573 890 613 849 647 845 595M832 538l5 53" fill="none" stroke="#a9abb0"/>
                <!-- Z -->
                <path d="M789 545v-18" stroke="#777468"/>
                <path d="m788 521 4 14h-7z" fill="#6b6753"/>
                <path d="m790 545 4 16-2 30 5 35-6-34 1-31-5-1z" fill="#0a2aa8" stroke="#0a2aa8"/>
                <!-- Y -->
                <path d="m797 626 76-65" stroke="#a9b4b8" stroke-width="1.500"/>
                <path d="m797 626 21-25 8-2-5 6zM844 589l2-6 14-10-7 12z" fill="#a9dcc0"/>
                <path d="m865 566 10-7-4 9z" fill="#b4b0ac"/>
                <!-- X -->
                <path d="m797 626 80 33" stroke="#d8282c" stroke-width="1.500"/>
                <path d="m802 628 34 12 3 3-8 1zM860 656l4-7 13 10z" fill="#e0302e"/>
                <path d="m877 659 25 9" stroke="#77766a"/>
                <path d="m888 669 2-7 12 6z" fill="#77745e"/>
                <path d="M792 626h10M797 621v10" stroke="#d46060"/>
                <g class="axis-text">
                    <text x="788" y="520" fill="#8b8a84">Z</text>
                    <text x="802" y="542" fill="#2b3fe0">ZM</text>
                    <text x="802" y="578" fill="#16399c">ZC</text>
                    <text x="823" y="594" fill="#2f8a50">YC</text>
                    <text x="850" y="568" fill="#2c78a8">YM</text>
                    <text x="880" y="560" fill="#6b9ee8">Y</text>
                    <text x="833" y="658" fill="#d23a3a">XC</text>
                    <text x="870" y="674" fill="#d23a3a">XM</text>
                    <text x="907" y="676" fill="#7c8088">X</text>
                    <text x="499" y="909" fill="#3a50b8">Z</text>
                    <text x="544" y="968" fill="#c84850">X</text>
                </g>
                <!-- view triad -->
                <g fill="#ccd4d3" stroke="#a6b0ae" opacity=".85">
                    <path d="m502 922 16-12 22 7 2 24-15 13-24-10z"/>
                    <path d="m502 922 24 7 14-12M526 929l1 25M518 910v22l24 9M518 932l-15 12" fill="none"/>
                </g>
                <path d="m501 946 33-26" stroke="#b4d0c4" stroke-width="3"/>
                <path d="m501 946-1-28" stroke="#1736a8" stroke-width="3"/>
                <path d="m499 909 4 11h-7z" fill="#1736a8"/>
                <path d="m503 948 28 9" stroke="#d0382e" stroke-width="3"/>
                <path d="m540 961-12 0 4-7z" fill="#d0382e"/>
                <circle cx="501" cy="947" r="3.500" fill="#ddd" stroke="#aaa"/>
                <!-- pointer -->
                <circle cx="1517" cy="771" r="29" fill="#e3dc0c"/>
                <circle cx="1517" cy="771" r="12" fill="none" stroke="#333" stroke-dasharray="14 5" stroke-dashoffset="-2"/>
                <path d="M1517 756v31M1502 771h31" stroke="#2a2a14" stroke-width="3"/>
                <path d="M1517 757v29M1503 771h29" stroke="#fff"/>
            </svg>
        </section>
    </main>

    <div class="statusbar">
        <button type="button" aria-label="全屏"><svg viewBox="0 0 16 16"><path d="M1 4V1h3M12 1h3v3M15 12v3h-3M4 15H1v-3" fill="none" stroke="#8a94a8"/><path d="M4 4h8v8H4z" fill="#a4b4dc" stroke="#444c60"/><path d="M4 5h8" stroke="#444c60" stroke-width="2"/></svg></button>
    </div>

    <footer class="taskbar">
        <button type="button" class="pin" aria-label="开始"><svg viewBox="0 0 24 24"><path d="m2 5 8-1v8H2zM11 4l11-2v10H11zM2 13h8v8l-8-1zM11 13h11v10l-11-2z" fill="#fff"/></svg></button>
        <button type="button" class="pin" aria-label="浏览器"><svg viewBox="0 0 24 24"><rect x="1" y="1" width="22" height="22" rx="3" fill="#f4f4f4"/><path d="M9 1Q2 8 2 18q3-6 7-6z" fill="#3a9a3c"/><path d="M9 1q11 2 12 16-3-3-6-2l-2 6z" fill="#d83a22"/><path d="m9 2 3 19-3-8z" fill="#f08a30"/></svg></button>
        <button type="button" class="pin" aria-label="画笔"><svg viewBox="0 0 24 24"><path d="m1 1 12 11" stroke="#16168c" stroke-width="4"/><path d="m10 12 5-3 5 8-2 3-6-2z" fill="#e8b83c"/><path d="m17 18 4 5" stroke="#16168c" stroke-width="4"/><circle cx="14" cy="14" r="2" fill="#a85c20"/></svg></button>
        <button type="button" class="task"><svg><use href="#nx-task"/></svg><span>NX 10 - 加工 - [光...</span></button>
        <button type="button" class="task"><svg viewBox="0 0 24 24"><path d="m2 15 10-4 11 3v3l-9 5-12-4z" fill="#bbb"/><path d="m2 15 10-4 11 3-9 4z" fill="#eee"/></svg><span>安装文件 (D:)</span></button>
        <button type="button" class="task"><svg viewBox="0 0 24 24"><rect width="24" height="24" rx="4" fill="#f4772a"/><path d="M6 8h12v6H6v4" fill="none" stroke="#fff" stroke-width="2"/></svg><span>点冠教育.pptx * - ...</span></button>
        <div class="tray">
            <svg viewBox="0 0 16 16"><path d="M4 1h8v14H4z" fill="#fff"/><path d="M4 9h8" stroke="#1b1d20" stroke-width="1.500"/><path d="M3 0v16M13 0v16" stroke="#fff" stroke-width="1" stroke-dasharray="2 1"/></svg>
            <svg viewBox="0 0 16 16"><circle cx="8" cy="8" r="7.500" fill="#2a4cc0"/><path d="M4 11V5l3 5V5m2 0 3 6m0-6-3 6" fill="none" stroke="#dfe8ff" stroke-width="1.500"/></svg>
            <svg><use href="#penguin"/></svg>
            <svg><use href="#penguin"/></svg>
            <svg class="after-gap" viewBox="0 0 16 16"><path d="M1 3h14v10H1z" fill="#6e9a14"/><path d="M2 8q5-6 10 0-4 5-7 1 2-3 4-1" fill="none" stroke="#22300a" stroke-width="1.500"/></svg>
            <svg viewBox="0 0 16 16"><path d="M4.500 3.500h11v8h-9M9 14h5M10 12v2M.5 1.500h4v4h-4zM2.500 6v8h4" fill="none" stroke="#fff"/></svg>
            <svg viewBox="0 0 16 16"><path d="M1 6h2l4-4v12l-4-4H1zM9 5q2 3 0 6M11 3q4 5 0 10M13 1q6 7 0 14" fill="none" stroke="#fff"/></svg>
            <span class="ime">中</span>
            <div class="clock"><span>14:52</span><span>2019/11/18</span></div>
        </div>
    </footer>
</div>
<script>
    // fill the rest of the navigator with empty rows
    var rows = document.getElementById("op-rows");
    for (var i = 0; i < 40; i++) {
        var tr = document.createElement("tr");
        tr.innerHTML = "<td></td><td></td><td></td><td></td><td></td>";
        rows.appendChild(tr);
    }
</script>
</body>
</html>
```

FILE: styles.css
```css
* {
    box-sizing: border-box;
}

html, body {
    height: 100%;
    margin: 0;
}

body {
    font-family: "Open Sans", "Noto Sans CJK SC", sans-serif;
    font-size: 12px;
    color: #222;
    overflow: hidden;
}

button {
    margin: 0;
    border: 0;
    padding: 0;
    background: none;
    color: inherit;
    font: inherit;
    white-space: nowrap;
}

svg {
    display: block;
    flex: none;
}

.defs {
    position: absolute;
    width: 0;
    height: 0;
}

.app {
    display: flex;
    flex-direction: column;
    height: 100vh;
    background: #fff;
}

/* title */
.titlebar {
    display: flex;
    align-items: center;
    height: 26px;
    padding-right: 7px;
}

.nx-logo {
    width: 42px;
    padding-left: 3px;
    border-right: 1px solid #ddd;
    color: #8796a5;
    font-family: "Liberation Sans", sans-serif;
    font-size: 22px;
    font-weight: bold;
    line-height: 24px;
}

.titlebar h1 {
    flex: 1;
    margin: 0;
    padding-left: 4px;
    font-size: 13px;
    font-weight: normal;
    line-height: 24px;
}

.siemens {
    margin-right: 27px;
    color: #0c8288;
    font-size: 13px;
    font-weight: 800;
}

.win-buttons, .doc-buttons {
    display: flex;
    gap: 12px;
    color: #555;
}

.win-buttons svg, .doc-buttons svg {
    width: 12px;
    height: 12px;
}

/* menu */
.menubar {
    display: flex;
    align-items: center;
    height: 27px;
    padding: 0 8px 3px 0;
    background: #c7d6d6;
    font-size: 11px;
}

.grip {
    flex: none;
    width: 2px;
    height: 20px;
    margin: 0 3px;
    border-left: 2px dotted #9aa4a4;
}

.menu-icon {
    width: 16px;
    height: 16px;
}

.menubar > button {
    padding: 0 8px 0 6px;
}

.menubar > .wide {
    margin-left: 8px;
}

.doc-buttons {
    gap: 6px;
    margin-left: auto;
    color: #1c2626;
}

/* toolbars */
.toolbar {
    display: flex;
    align-items: center;
    font-size: 11px;
}

.toolbar-main {
    align-self: flex-start;
    height: 34px;
    border-right: 1px solid #ddd;
    border-bottom: 1px solid #ddd;
}

.toolbar-select {
    height: 34px;
    padding-left: 5px;
    border-bottom: 1px solid #8c8c8c;
}

.tb {
    display: flex;
    flex: none;
    align-items: center;
    justify-content: center;
    width: 31px;
    height: 30px;
}

.tb svg {
    width: 24px;
    height: 24px;
}

.tb.active {
    border: 1px solid #a9b8b8;
    background: #c7d6d6;
}

.tb-text {
    width: 22px;
    line-height: 16px;
}

.macro {
    width: 40px;
    padding-left: 4px;
    text-align: left;
}

.origin {
    font-size: 7px;
}

.spill {
    overflow: visible;
}

.drop {
    flex: none;
    width: 12px;
    height: 30px;
}

.drop::after, .select::after {
    content: "";
    display: block;
    width: 0;
    margin: 0 auto;
    border: 3px solid transparent;
    border-top-color: #222;
    border-bottom: 0;
}

.toolbar-select .drop {
    margin-left: 2px;
}

.drop-low {
    padding-top: 14px;
}

.toolbar-select .drop-end {
    margin-left: auto;
    margin-right: 3px;
    padding-top: 12px;
}

.sep {
    flex: none;
    width: 1px;
    height: 30px;
    margin: 0 2px;
    background: #ddd;
}

.select {
    position: relative;
    flex: none;
    height: 20px;
    margin: 0 4px;
}

.select::after {
    position: absolute;
    top: 8px;
    right: 5px;
    border-width: 4px;
    border-bottom: 0;
    pointer-events: none;
}

.select select {
    width: 100%;
    height: 100%;
    padding: 0 2px;
    border: 1px solid #9a9a9a;
    border-radius: 0;
    appearance: none;
    background: #fff;
    color: #222;
    font: inherit;
}

.layer-select {
    width: 49px;
    margin-left: 3px;
}

.filter-select {
    width: 133px;
    margin-left: 0;
}

.scope-select {
    width: 140px;
    margin-left: 3px;
}

.all-select {
    width: 56px;
}

.search {
    display: flex;
    align-items: center;
    width: 125px;
    height: 20px;
    margin: 0 4px 0 7px;
    padding: 0 2px;
    border: 1px solid #9a9a9a;
}

.search input {
    flex: 1;
    min-width: 0;
    padding: 0;
    border: 0;
    outline: none;
    color: #222;
    font: inherit;
}

.search svg {
    width: 16px;
    height: 16px;
}

/* work area */
.work {
    display: flex;
    flex: 1;
    min-height: 0;
}

.resource-bar {
    display: flex;
    flex-direction: column;
    width: 32px;
    border-right: 1px solid #9a9a9a;
    background: #dadada;
}

.resource-bar button {
    display: flex;
    align-items: center;
    justify-content: center;
    height: 42px;
    padding-left: 4px;
}

.resource-bar svg {
    width: 24px;
    height: 24px;
}

.resource-bar .gear {
    height: 26px;
    margin-bottom: 16px;
    padding: 0 2px 0 0;
}

.resource-bar .gear svg {
    width: 16px;
    height: 16px;
}

.resource-bar .current {
    margin-left: 3px;
    margin-right: -1px;
    padding-left: 1px;
    background: #fff;
}

.resource-bar .spaced {
    margin-bottom: 12px;
}

.navigator {
    display: flex;
    flex-direction: column;
    width: 400px;
    padding: 0 9px 6px 6px;
    border-right: 1px solid #aaa;
}

.nav-title {
    display: flex;
    align-items: center;
    justify-content: space-between;
    height: 30px;
    padding: 0 7px 0 4px;
}

.nav-title h2 {
    margin: 0;
    font-size: 12px;
    font-weight: normal;
}

.maximize {
    width: 12px;
    height: 11px;
    border: 1px solid #222;
    border-top-width: 2px;
}

.nav-frame {
    display: flex;
    flex: 1;
    flex-direction: column;
    min-height: 0;
    border: 1px solid #ccc;
    border-bottom: 0;
}

.nav-rows {
    flex: 1;
    min-height: 0;
    overflow: hidden;
}

.ops {
    width: 100%;
    table-layout: fixed;
    border-collapse: separate;
    border-spacing: 0;
}

.c-tool {
    width: 76px;
}

.c-path {
    width: 45px;
}

.c-method {
    width: 64px;
}

.c-more {
    width: 8px;
}

.ops th, .ops td {
    height: 20px;
    padding: 0 0 0 4px;
    border-right: 1px solid #e6e6e6;
    border-bottom: 1px solid #ececec;
    overflow: hidden;
    text-align: left;
    font-weight: normal;
    line-height: 19px;
    white-space: nowrap;
}

.ops th {
    padding-left: 6px;
    border-color: #d0d0d0;
    background: #ededed;
}

.ops td:first-child {
    padding-left: 10px;
}

.ops td.root {
    padding-left: 4px;
}

.ops th:last-child, .ops td:last-child {
    border-right: 0;
}

.ops tbody tr:nth-child(even) {
    background: #fafafa;
}

.ops .op {
    color: #92aca2;
}

.node {
    display: flex;
    align-items: center;
    height: 19px;
}

.ic14 {
    width: 14px;
    height: 14px;
    margin-right: 3px;
}

.ic16 {
    width: 16px;
    height: 16px;
    margin-right: 3px;
}

.op .node .ic14 {
    margin: 0 1px;
}

.toggle {
    width: 9px;
    height: 9px;
    margin: 0 6px 0 -4px;
    border: 1px solid #ccc;
    background: linear-gradient(#333, #333) center / 5px 1px no-repeat #fff;
}

.g1, .g2 {
    align-self: stretch;
    width: 19px;
    border-left: 1px dotted #999;
}

.g2 {
    width: 10px;
    border-left-color: #c88;
    background: repeating-linear-gradient(90deg, #999 0 1px, transparent 1px 3px) 0 9px / 100% 1px no-repeat;
}

.last .g2 {
    height: 10px;
}

.g3 {
    align-self: flex-start;
    width: 8px;
    height: 10px;
    margin-right: 3px;
    border-left: 1px dotted #999;
    border-bottom: 1px dotted #999;
}

.scroll {
    display: flex;
    height: 17px;
    background: #f0f0f0;
}

.scroll button {
    width: 17px;
    padding: 0 5px;
}

.scroll svg {
    width: 8px;
    height: 10px;
}

.track {
    flex: 1;
}

.thumb {
    width: 36%;
    height: 15px;
    margin-top: 1px;
    background: #cdcdcd;
}

.splitter {
    height: 5px;
    margin-top: 2px;
    border: 1px solid #aaa;
    background: #ddd;
}

.viewport {
    flex: 1;
    min-width: 0;
    background: linear-gradient(#b4b5b6, #c5c6c7 27%, #d5d6d7 50%, #e3e5e5 70%, #e6e8e9);
}

.viewport svg {
    width: 100%;
    height: 100%;
}

.axis-text {
    font-size: 12px;
    text-anchor: middle;
}

/* status and taskbar */
.statusbar {
    display: flex;
    align-items: center;
    justify-content: flex-end;
    height: 22px;
    padding: 0 55px 2px 0;
    border-top: 1px solid #aaa;
}

.statusbar svg {
    width: 16px;
    height: 16px;
}

.taskbar {
    display: flex;
    align-items: center;
    height: 40px;
    background: #1b1d20;
    color: #fff;
}

.pin {
    display: flex;
    justify-content: center;
    width: 53px;
}

.pin svg, .task svg {
    width: 24px;
    height: 24px;
}

.pin:first-child {
    width: 50px;
    padding-right: 2px;
}

.pin:nth-child(3) {
    margin-right: 2px;
}

.task {
    display: flex;
    align-items: center;
    gap: 4px;
    width: 158px;
    height: 38px;
    margin-right: 3px;
    padding: 0 8px;
    border: 1px solid #77797b;
    background: #45474a;
}

.tray {
    display: flex;
    align-items: center;
    margin-left: auto;
    padding-right: 12px;
}

.tray svg {
    width: 16px;
    height: 16px;
    margin: 0 4px;
}

.tray .after-gap {
    margin-left: 28px;
}

.ime {
    width: 24px;
    text-align: center;
}

.clock {
    display: flex;
    flex-direction: column;
    width: 70px;
    line-height: 19px;
    text-align: center;
}
```
